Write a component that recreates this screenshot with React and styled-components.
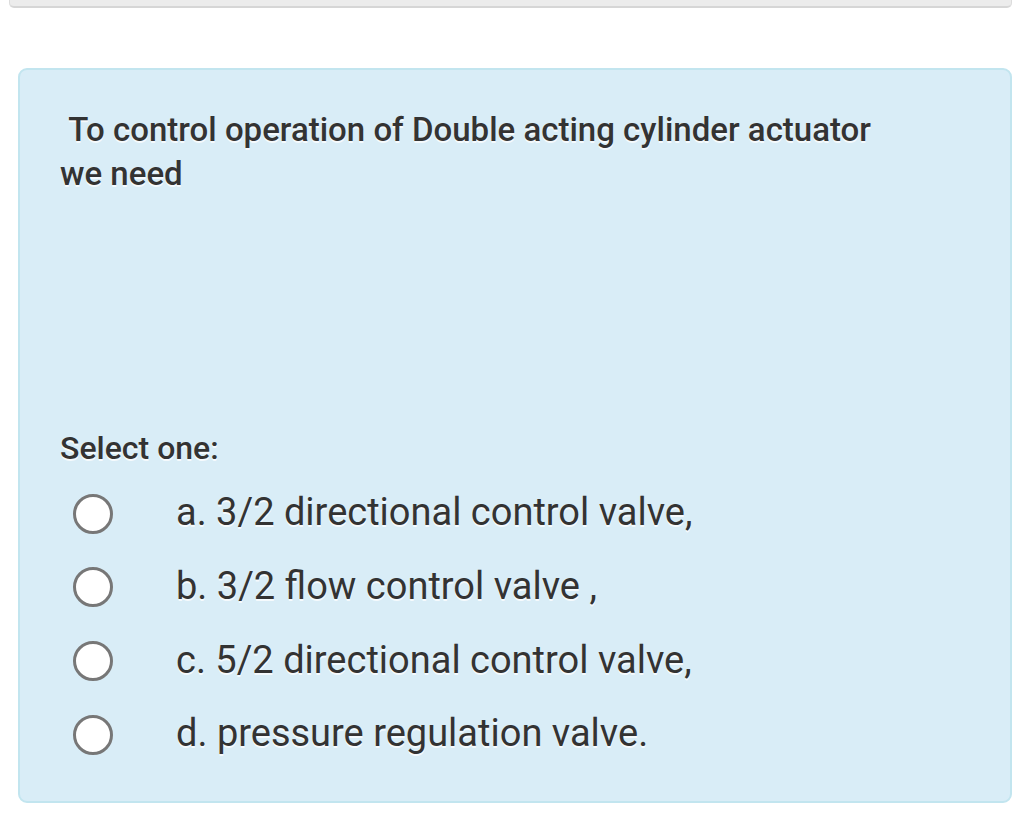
import React from "react";
import styled, { createGlobalStyle } from "styled-components";

const Global = createGlobalStyle`
  html, body { margin: 0; padding: 0; background: #ffffff; }
  body { font-family: Roboto, "Noto Sans", sans-serif; color: #333333; }
`;

const Page = styled.div`
  display: flex;
  flex-direction: column;
  padding: 0 2px 0 18px;
`;

const TopBar = styled.div`
  height: 8px;
  margin: -2px 0 0 -9px;
  background: #ececec;
  border: 1px solid #dcdcdc;
  border-top: none;
  border-bottom: 2px solid #d6d6d6;
  border-radius: 0 0 5px 5px;
`;

const Card = styled.div`
  margin-top: 60px;
  background: #d9edf7;
  border: 2px solid #c2e5ef;
  border-radius: 9px;
  padding: 38px 40px 24px 40px;
  height: 735px;
  box-sizing: border-box;
  display: flex;
  flex-direction: column;
  text-shadow: 0 2px 0 rgba(255, 255, 255, 0.75);
`;

const Question = styled.div`
  font-size: 33px;
  font-weight: 500;
  line-height: 44px;
  color: #333;
  min-height: 320px;
`;

const Prompt = styled.div`
  font-size: 32px;
  font-weight: 500;
  line-height: 40px;
  color: #333;
  margin-bottom: 9px;
`;

const Options = styled.div`
  display: flex;
  flex-direction: column;
`;

const Option = styled.label`
  display: flex;
  align-items: center;
  height: 73.67px;
`;

const Radio = styled.span`
  width: 34px;
  height: 34px;
  border-radius: 50%;
  border: 3px solid #777777;
  background: #ffffff;
  margin-left: 13px;
  flex: none;
`;

const OptionText = styled.span`
  margin-left: 63px;
  margin-bottom: 3px;
  font-size: 38px;
  font-weight: 400;
  color: #333;
`;

const options = [
  "a. 3/2 directional control valve,",
  "b. 3/2 flow control valve ,",
  "c. 5/2 directional control valve,",
  "d. pressure regulation valve.",
];

export default function App() {
  return (
    <Page>
      <Global />
      <TopBar />
      <Card>
        <Question>
          &nbsp;To control operation of Double acting cylinder actuator
          <br />
          we need
        </Question>
        <Prompt>Select one:</Prompt>
        <Options>
          {options.map((o) => (
            <Option key={o}>
              <Radio />
              <OptionText>{o}</OptionText>
            </Option>
          ))}
        </Options>
      </Card>
    </Page>
  );
}
